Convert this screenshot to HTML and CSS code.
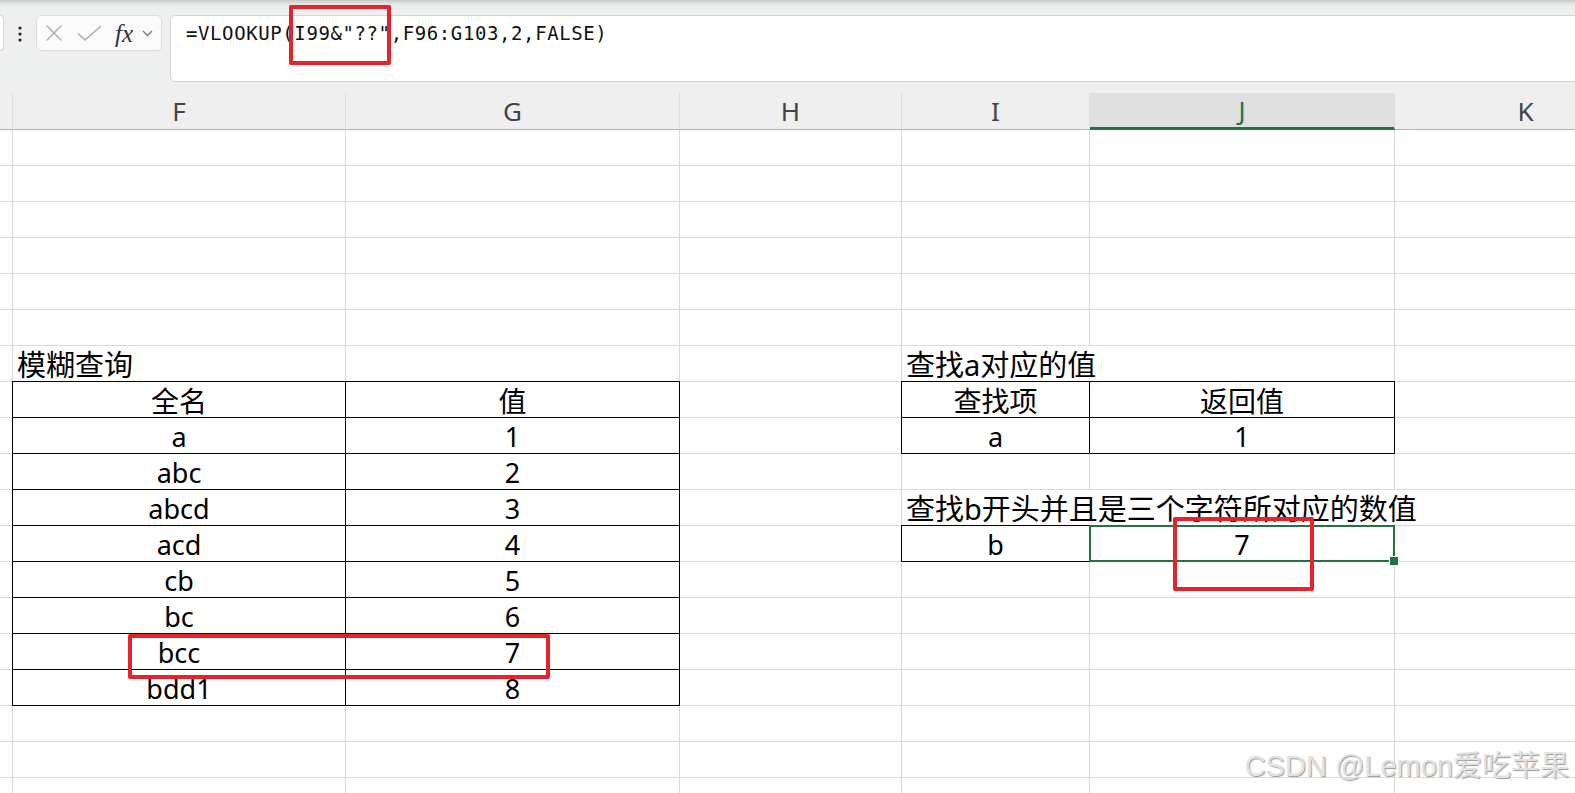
FILE: index.html
```html
<!doctype html>
<html lang="zh-CN">
<head>
    <meta charset="utf-8"/>
    <title>VLOOKUP 模糊查询</title>
    <link rel="stylesheet" href="styles.css">
</head>
<body>
    <div class="toolbar">
        <div class="namebox"></div>
        <div class="more">
            <svg width="4" height="16" viewBox="0 0 4 16"><circle cx="2" cy="2" r="1.6"/><circle cx="2" cy="8" r="1.6"/><circle cx="2" cy="14" r="1.6"/></svg>
        </div>
        <div class="fxbox">
            <svg class="ic-x" width="18" height="18" viewBox="0 0 18 18"><path d="M1.5 1.5L16.5 16.5M16.5 1.5L1.5 16.5"/></svg>
            <svg class="ic-ok" width="25" height="16" viewBox="0 0 25 16"><path d="M1 8.5L8 15L24 1"/></svg>
            <span class="fx">fx</span>
            <svg class="ic-down" width="11" height="7" viewBox="0 0 11 7"><path d="M1 1L5.5 5.5L10 1"/></svg>
        </div>
        <div class="formula">=VLOOKUP(I99&amp;"??",F96:G103,2,FALSE)</div>
    </div>

    <div class="sheet">
        <!-- column headers -->
        <div class="hd"></div><div class="hd">F</div><div class="hd">G</div><div class="hd">H</div><div class="hd">I</div><div class="hd on">J</div><div class="hd">K</div>

        <!-- 1-6 -->
        <div class="c"></div><div class="c"></div><div class="c"></div><div class="c"></div><div class="c"></div><div class="c"></div><div class="c"></div>
        <div class="c"></div><div class="c"></div><div class="c"></div><div class="c"></div><div class="c"></div><div class="c"></div><div class="c"></div>
        <div class="c"></div><div class="c"></div><div class="c"></div><div class="c"></div><div class="c"></div><div class="c"></div><div class="c"></div>
        <div class="c"></div><div class="c"></div><div class="c"></div><div class="c"></div><div class="c"></div><div class="c"></div><div class="c"></div>
        <div class="c"></div><div class="c"></div><div class="c"></div><div class="c"></div><div class="c"></div><div class="c"></div><div class="c"></div>
        <div class="c"></div><div class="c"></div><div class="c"></div><div class="c"></div><div class="c"></div><div class="c"></div><div class="c"></div>

        <!-- 7: titles -->
        <div class="c"></div><div class="c l">模糊查询</div><div class="c"></div><div class="c"></div><div class="c l span2">查找a对应的值</div><div class="c"></div>
        <!-- 8 -->
        <div class="c"></div><div class="c t zh">全名</div><div class="c t zh">值</div><div class="c"></div><div class="c t zh">查找项</div><div class="c t zh">返回值</div><div class="c"></div>
        <!-- 9 -->
        <div class="c"></div><div class="c t">a</div><div class="c t">1</div><div class="c"></div><div class="c t">a</div><div class="c t">1</div><div class="c"></div>
        <!-- 10 -->
        <div class="c"></div><div class="c t">abc</div><div class="c t">2</div><div class="c"></div><div class="c"></div><div class="c"></div><div class="c"></div>
        <!-- 11 -->
        <div class="c"></div><div class="c t">abcd</div><div class="c t">3</div><div class="c"></div><div class="c l span3">查找b开头并且是三个字符所对应的数值</div>
        <!-- 12 -->
        <div class="c"></div><div class="c t">acd</div><div class="c t">4</div><div class="c"></div><div class="c t">b</div><div class="c t sel">7</div><div class="c"></div>
        <!-- 13-16 -->
        <div class="c"></div><div class="c t">cb</div><div class="c t">5</div><div class="c"></div><div class="c"></div><div class="c"></div><div class="c"></div>
        <div class="c"></div><div class="c t">bc</div><div class="c t">6</div><div class="c"></div><div class="c"></div><div class="c"></div><div class="c"></div>
        <div class="c"></div><div class="c t">bcc</div><div class="c t">7</div><div class="c"></div><div class="c"></div><div class="c"></div><div class="c"></div>
        <div class="c"></div><div class="c t">bdd1</div><div class="c t">8</div><div class="c"></div><div class="c"></div><div class="c"></div><div class="c"></div>
        <!-- 17-19 -->
        <div class="c"></div><div class="c"></div><div class="c"></div><div class="c"></div><div class="c"></div><div class="c"></div><div class="c"></div>
        <div class="c"></div><div class="c"></div><div class="c"></div><div class="c"></div><div class="c"></div><div class="c"></div><div class="c"></div>
        <div class="c"></div><div class="c"></div><div class="c"></div><div class="c"></div><div class="c"></div><div class="c"></div><div class="c"></div>
    </div>

    <!-- red annotation boxes -->
    <div class="mark m-formula"></div>
    <div class="mark m-row"></div>
    <div class="mark m-result"></div>

    <div class="watermark">CSDN @Lemon爱吃苹果</div>
</body>
</html>
```

FILE: styles.css
```css
* {
    box-sizing: border-box;
}
html, body {
    margin: 0;
    height: 100%;
    overflow: hidden;
    background: #fff;
}
body {
    position: relative;
    font-family: "Noto Sans", "Noto Sans CJK SC", sans-serif;
    color: #000;
}

/* formula bar */
.toolbar {
    height: 93px;
    display: flex;
    align-items: flex-start;
    padding-top: 15px;
    background: linear-gradient(#c8cac8, #e4e7e5 4px, #edf0ee 7px);
}
.namebox {
    width: 4px;
    height: 36px;
    background: #fff;
    border: 1px solid #d6d6d6;
    border-left: none;
    border-radius: 0 4px 4px 0;
}
.more {
    width: 32px;
    display: flex;
    justify-content: center;
    padding-top: 11px;
}
.more svg {
    fill: #222;
}
.fxbox {
    width: 126px;
    height: 36px;
    display: flex;
    align-items: center;
    background: #fbfbfb;
    border: 1px solid #dcdcdc;
    border-radius: 5px;
}
.fxbox svg {
    fill: none;
    stroke-width: 1.3;
}
.ic-x {
    margin-left: 8px;
    stroke: #a8a8a8;
}
.ic-ok {
    margin-left: 14px;
    stroke: #a8a8a8;
}
.fx {
    margin-left: 13px;
    font-family: "Liberation Serif", serif;
    font-style: italic;
    font-size: 25px;
    line-height: 1;
    color: #333;
}
.ic-down {
    margin-left: 9px;
    stroke: #777;
}
.formula {
    flex: 1;
    height: 67px;
    margin-left: 8px;
    margin-right: -10px;
    padding: 6px 0 0 15px;
    background: #fff;
    border: 1px solid #d4d4d4;
    border-radius: 5px;
    font-family: "DejaVu Sans Mono", monospace;
    font-size: 19px;
    letter-spacing: 0.6px;
    color: #111;
}

/* grid */
.sheet {
    display: grid;
    grid-template-columns: 13px 333px 334px 222px 188px 305px 262px;
    grid-template-rows: 37px;
    grid-auto-rows: 36px;
}
.hd {
    display: flex;
    align-items: center;
    justify-content: center;
    background: #efefef;
    border-right: 1px solid #dcdcdc;
    border-bottom: 1px solid #b4b4b4;
    font-size: 26px;
    color: #444;
}
.hd.on {
    background: #e0e0e0;
    border-bottom: 3px solid #217346;
    color: #217346;
}
.c {
    display: flex;
    align-items: flex-end;
    justify-content: center;
    padding-bottom: 1px;
    border-right: 1px solid #dadada;
    border-bottom: 1px solid #dadada;
    font-size: 27px;
    line-height: 30px;
    white-space: nowrap;
}
.c.zh {
    font-size: 28px;
}
.c.l {
    justify-content: flex-start;
    padding-left: 4px;
    font-size: 29px;
}
.span2 {
    grid-column: span 2;
}
.span3 {
    grid-column: span 3;
}
.c.t {
    border-right-color: #000;
    border-bottom-color: #000;
    box-shadow: 0 -1px 0 #000, -1px 0 0 #000, -1px -1px 0 #000;
}
.sel {
    position: relative;
}
.sel:after {
    content: '';
    position: absolute;
    left: -1px;
    top: -1px;
    right: -1px;
    bottom: -1px;
    border: 2px solid #217346;
    z-index: 1;
}
.sel:before {
    content: '';
    position: absolute;
    right: -5px;
    bottom: -5px;
    width: 8px;
    height: 8px;
    background: #217346;
    border: 1px solid #fff;
    z-index: 2;
}

/* annotations */
.mark {
    position: absolute;
    border: 4px solid #e8222b;
    border-radius: 2px;
    z-index: 5;
}
.m-formula {
    left: 289px;
    top: 5px;
    width: 102px;
    height: 60px;
}
.m-row {
    left: 128px;
    top: 634px;
    width: 422px;
    height: 45px;
}
.m-result {
    left: 1173px;
    top: 517px;
    width: 141px;
    height: 74px;
}

.watermark {
    position: absolute;
    right: 6px;
    top: 742px;
    font-family: "Liberation Sans", "Noto Sans CJK SC", sans-serif;
    font-size: 29px;
    color: #e2e2e2;
    text-shadow: 1px 1px 1px #9c9c9c;
    z-index: 6;
}
```
